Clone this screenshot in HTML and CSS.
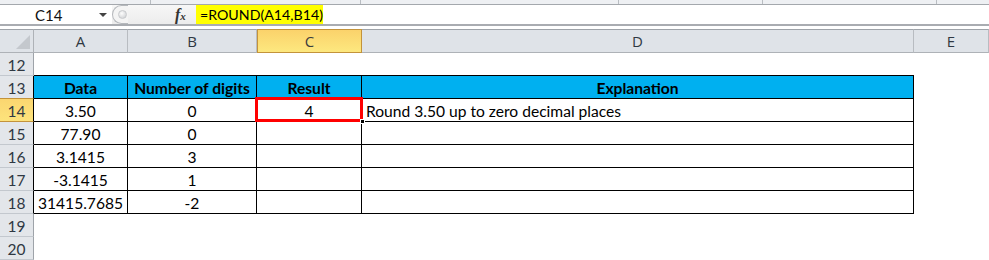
FILE: index.html
```html
<!DOCTYPE html>
<html>
<head>
<meta charset="utf-8">
<link rel="stylesheet" href="styles.css">
</head>
<body>
<div class="topstrip">
  <div class="tick t1"></div>
  <div class="tick t2"></div>
  <div class="tick t3"></div>
  <div class="tick t4"></div>
  <div class="tick t5"></div>
</div>
<div class="fbar">
  <div class="namebox">
    <span class="ref">C14</span>
    <span class="drop"></span>
  </div>
  <div class="fbtns">
    <div class="handle"><span class="dot"></span></div>
    <span class="fx"><i>f</i><i class="x">x</i></span>
  </div>
  <div class="finput"><span class="formula">=ROUND(A14,B14)</span></div>
</div>
<div class="gap"></div>
<div class="sheet">
  <div class="ch corner"><span class="tri"></span></div>
  <div class="ch">A</div>
  <div class="ch">B</div>
  <div class="ch sel">C</div>
  <div class="ch">D</div>
  <div class="ch">E</div>

  <div class="rh">12</div>
  <div class="c topline"></div><div class="c topline"></div><div class="c topline"></div><div class="c topline"></div><div class="c"></div>

  <div class="rh tb">13</div>
  <div class="c t th">Data</div><div class="c t th">Number of digits</div><div class="c t th">Result</div><div class="c t th">Explanation</div><div class="c"></div>

  <div class="rh tb rsel">14</div>
  <div class="c t">3.50</div><div class="c t">0</div><div class="c t active">4<span class="selbox"></span><span class="fill"></span></div><div class="c t left">Round 3.50 up to zero decimal places</div><div class="c"></div>

  <div class="rh tb">15</div>
  <div class="c t">77.90</div><div class="c t">0</div><div class="c t"></div><div class="c t left"></div><div class="c"></div>

  <div class="rh tb">16</div>
  <div class="c t">3.1415</div><div class="c t">3</div><div class="c t"></div><div class="c t left"></div><div class="c"></div>

  <div class="rh tb">17</div>
  <div class="c t">-3.1415</div><div class="c t">1</div><div class="c t"></div><div class="c t left"></div><div class="c"></div>

  <div class="rh tb">18</div>
  <div class="c t">31415.7685</div><div class="c t">-2</div><div class="c t"></div><div class="c t left"></div><div class="c"></div>

  <div class="rh">19</div>
  <div class="c"></div><div class="c"></div><div class="c"></div><div class="c"></div><div class="c"></div>

  <div class="rh">20</div>
  <div class="c"></div><div class="c"></div><div class="c"></div><div class="c"></div><div class="c"></div>
</div>
</body>
</html>
```
FILE: styles.css
```css
* { box-sizing: border-box; }
html, body { margin: 0; padding: 0; background: #fff; }
body {
  width: 989px;
  height: 260px;
  overflow: hidden;
  font-family: Lato, "Open Sans", "Liberation Sans", sans-serif;
  font-size: 15.6px;
  color: #000;
}

/* top ribbon remnant */
.topstrip {
  height: 5px;
  background: #eef0f3;
  border-bottom: 1px solid #a4a8ad;
  display: flex;
}
.tick { height: 4px; border-right: 1px solid #b9bdc2; }
.t1 { width: 151px; }
.t2 { width: 210px; }
.t3 { width: 258px; }
.t4 { width: 144px; }
.t5 { width: 174px; }

/* formula bar */
.fbar {
  height: 21px;
  display: flex;
  border-bottom: 2px solid #a9acb1;
}
.namebox {
  width: 112px;
  background: #fff;
  display: flex;
  align-items: center;
}
.ref { margin-left: 35px; font-size: 15px; color: #111; }
.drop {
  margin-left: 37px;
  width: 0; height: 0;
  border-left: 4px solid transparent;
  border-right: 4px solid transparent;
  border-top: 4px solid #444;
  margin-top: 1px;
}
.fbtns {
  width: 84px;
  background: linear-gradient(#f7f7f7, #ececec);
  display: flex;
  align-items: center;
}
.handle {
  width: 16px;
  height: 19px;
  border: 1px solid #b5b8bc;
  border-right: none;
  border-radius: 10px 0 0 10px;
  background: #f4f4f4;
  display: flex;
  align-items: center;
  justify-content: center;
}
.dot {
  width: 9px; height: 9px; border-radius: 50%;
  background: radial-gradient(circle at 40% 35%, #fdfdfd, #c9cbce);
  border: 1px solid #c8cacd;
  margin-left: 4px;
}
.fx {
  margin-left: 47px;
  font-family: "Liberation Serif", serif;
  font-weight: bold;
  font-size: 16px;
  color: #333;
  display: flex;
  align-items: baseline;
}
.fx i { font-style: italic; }
.fx .x { font-size: 11px; }
.finput {
  flex: 1;
  background: #fff;
  display: flex;
  align-items: stretch;
}
.formula {
  background: #ffff00;
  width: 127px;
  padding-left: 4px;
  display: flex;
  align-items: center;
  color: #000;
  font-size: 14.2px;
}
.gap { height: 3px; background: #fff; }

/* grid */
.sheet {
  display: grid;
  grid-template-columns: 34px 94px 129px 105px 552px 75px;
  grid-template-rows: 24px repeat(9, 23px);
}
.ch {
  background: #dfe3e8;
  border-top: 1px solid #9ea3a9;
  border-bottom: 1px solid #aeb2b7;
  border-right: 1px solid #b8bcc1;
  display: flex;
  align-items: center;
  justify-content: center;
  color: #2f3842;
  font-family: "Open Sans", Lato, sans-serif;
  font-size: 15px;
}
.ch.sel {
  background: linear-gradient(#fbd26b, #fde87f);
  border: 1px solid #c3933b;
  color: #3c3c3c;
}
.corner {
  position: relative;
  border-right: 1px solid #aeb2b7;
}
.tri {
  position: absolute;
  right: 3px;
  bottom: 3px;
  width: 0; height: 0;
  border-left: 14px solid transparent;
  border-bottom: 14px solid #c4c8cd;
}
.rh {
  background: #e3e6ea;
  border-right: 1px solid #9ea3a9;
  border-bottom: 1px solid #c3c8ce;
  display: flex;
  align-items: center;
  justify-content: center;
  color: #2f3842;
  font-size: 15.5px;
  padding-top: 1px;
}
.rh.tb { border-right-color: #000; }
.rh.rsel {
  background: linear-gradient(#fbd670, #fde37c);
  border-top: 1px solid #c3933b;
  border-bottom: 1px solid #c3933b;
  margin-top: -1px;
}
.c {
  display: flex;
  align-items: center;
  justify-content: center;
  white-space: nowrap;
  padding-top: 1px;
}
.c.topline { border-bottom: 1px solid #000; }
.c.t {
  border-right: 1px solid #000;
  border-bottom: 1px solid #000;
}
.c.th {
  background: #00b0f0;
  font-weight: bold;
}
.c.left { justify-content: flex-start; padding-left: 4px; }
.active { position: relative; }
.selbox {
  position: absolute;
  left: -2px;
  top: -2px;
  right: -2px;
  bottom: -1px;
  border: 3px solid #ff0000;
}
.fill {
  position: absolute;
  right: -4px;
  bottom: -3px;
  width: 5px;
  height: 5px;
  background: #000;
  border: 1px solid #fff;
}
```
